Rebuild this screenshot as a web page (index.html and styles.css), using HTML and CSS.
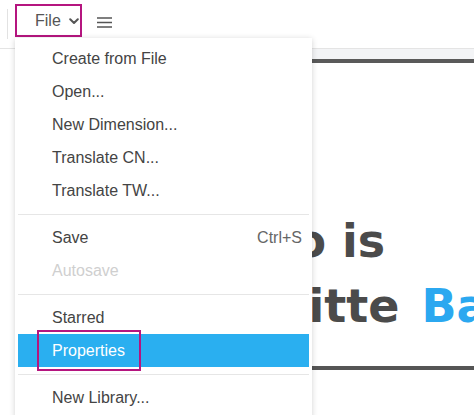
FILE: index.html
```html
<!DOCTYPE html>
<html lang="en">
<head>
<meta charset="utf-8">
<title>File menu</title>
<link rel="stylesheet" href="styles.css">
</head>
<body>
<header class="topbar">
  <div class="divider"></div>
  <button class="file-btn">File
    <svg class="chev" width="10" height="7" viewBox="0 0 10 7"><path d="M1.2 1.2 L5 5 L8.8 1.2" fill="none" stroke="#555" stroke-width="2" stroke-linecap="round" stroke-linejoin="round"/></svg>
  </button>
  <button class="hamburger" aria-label="Menu">
    <svg width="15" height="11" viewBox="0 0 15 11"><path d="M0 1 H15 M0 5.5 H15 M0 10 H15" stroke="#555" stroke-width="1.7"/></svg>
  </button>
</header>
<main class="page">
  <div class="page-band"></div>
  <h1 class="title"><span class="line l1">Who is</span><span class="line l2">Brigitte <span class="accent">Bardot</span></span></h1>
  <hr class="rule">
  <p class="meta">Posted in Bio · 00.0</p>
</main>
<nav class="menu">
  <div class="item">Create from File</div>
  <div class="item">Open...</div>
  <div class="item">New Dimension...</div>
  <div class="item">Translate CN...</div>
  <div class="item">Translate TW...</div>
  <div class="sep"></div>
  <div class="item"><span>Save</span><span class="shortcut">Ctrl+S</span></div>
  <div class="item disabled">Autosave</div>
  <div class="sep"></div>
  <div class="item">Starred</div>
  <div class="item active">Properties<span class="mark"></span></div>
  <div class="sep"></div>
  <div class="item">New Library...</div>
</nav>
</body>
</html>
```
FILE: styles.css
```css
html, body {
  margin: 0;
  padding: 0;
  height: 415px;
  overflow: hidden;
  background: #fff;
  font-family: "Liberation Sans", Arial, sans-serif;
}
.topbar {
  display: flex;
  align-items: flex-start;
  height: 48px;
  border-bottom: 1px solid #e4e4e4;
  box-sizing: content-box;
}
.divider {
  width: 1px;
  height: 30px;
  margin: 9px 0 0 7px;
  background: #e2e2e2;
}
.file-btn {
  display: flex;
  align-items: center;
  box-sizing: border-box;
  width: 67px;
  height: 33px;
  margin: 4px 0 0 7px;
  padding: 0 0 0 18px;
  border: 2px solid #b5157f;
  background: #fff;
  font-family: "Liberation Sans", Arial, sans-serif;
  font-size: 16px;
  color: #555;
}
.chev { margin-left: 8px; margin-top: 1px; }
.hamburger {
  margin: 17px 0 0 15px;
  padding: 0;
  border: 0;
  background: none;
  line-height: 0;
}
.page {
  margin-left: 24px;
}
.page-band {
  height: 10px;
  background: #f3f4f6;
  border-bottom: 4px solid #5a5a5a;
}
.title {
  margin: 146px 0 0;
  font-family: "DejaVu Sans", Verdana, sans-serif;
  font-weight: 700;
  font-size: 46px;
  line-height: 65px;
  color: #4b4b4b;
  white-space: nowrap;
}
.line { display: block; }
.l1 { padding-left: 187px; }
.l2 { padding-left: 178px; word-spacing: 6px; }
.accent { color: #2ba8f0; }
.rule {
  margin: 27px 0 0;
  height: 4px;
  border: 0;
  background: #555;
}
.meta {
  margin: 44px 0 0 298px;
  font-size: 15px;
  color: #555;
  white-space: nowrap;
}
.menu {
  position: absolute;
  left: 15px;
  top: 38px;
  width: 297px;
  box-sizing: border-box;
  padding: 4px 3px;
  background: #fff;
  box-shadow: 0 1px 6px rgba(0,0,0,0.18);
}
.item {
  position: relative;
  display: flex;
  justify-content: space-between;
  height: 33px;
  line-height: 33px;
  padding: 0 7px 0 34px;
  font-size: 16px;
  color: #444;
}
.shortcut { color: #666; }
.disabled { color: #cfcfcf; }
.sep {
  height: 1px;
  margin: 7px 0 6px;
  background: #e6e6e6;
}
.active {
  background: #2aaff0;
  color: #fff;
}
.mark {
  position: absolute;
  left: 19px;
  top: -4px;
  width: 104px;
  height: 41px;
  box-sizing: border-box;
  border: 2px solid #b5157f;
}
```
